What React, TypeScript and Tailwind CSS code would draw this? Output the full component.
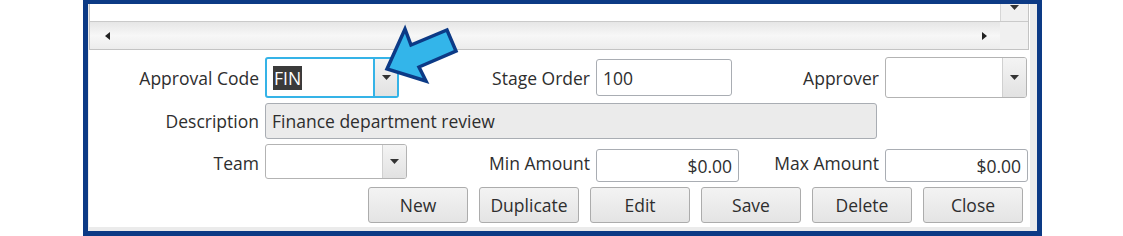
import React from 'react'

function DropArrow() {
  return (
    <svg width="9" height="5" viewBox="0 0 9 5">
      <path d="M0 0h9L4.5 5z" fill="#333" />
    </svg>
  )
}

function Combo(props: { className: string; focused?: boolean; children?: React.ReactNode }) {
  const f = props.focused
  return (
    <div
      className={
        'flex overflow-hidden rounded-[3px] bg-white ' +
        (f ? 'border-2 border-[#35b3e7] ' : 'border border-[#b3b3b3] ') +
        props.className
      }
    >
      <div className="flex flex-1 items-center pl-[6px]">{props.children}</div>
      <div
        className={
          'flex w-[24px] items-center justify-center bg-gradient-to-b from-[#f4f4f4] to-[#e2e2e2] ' +
          (f ? 'border-l-2 border-[#35b3e7]' : 'border-l border-[#d0d0d0]')
        }
      >
        <DropArrow />
      </div>
    </div>
  )
}

function TextBox(props: { className: string; value?: string; right?: boolean; disabled?: boolean }) {
  return (
    <div
      className={
        'flex items-center rounded-[3px] border border-[#a9adb3] px-[6px] pt-[1px] text-[17.5px] text-[#2e2e2e] ' +
        (props.right ? 'justify-end ' : '') +
        (props.disabled ? 'bg-[#ebebeb] ' : 'bg-white ') +
        props.className
      }
    >
      {props.value}
    </div>
  )
}

function Lbl(props: { className: string; children: React.ReactNode }) {
  return (
    <div className={'shrink-0 pr-[6px] pt-[1px] text-right text-[17.5px] text-[#2e2e2e] ' + props.className}>
      {props.children}
    </div>
  )
}

function Btn(props: { children: React.ReactNode }) {
  return (
    <button className="flex h-[36px] w-[100px] items-center justify-center rounded-[3px] border border-[#acacac] bg-gradient-to-b from-[#f3f3f3] to-[#e4e4e4] pt-[1px] text-[17.5px] text-[#2e2e2e]">
      {props.children}
    </button>
  )
}

export default function App() {
  return (
    <div className="relative h-[236px] w-[1123px] bg-white font-['Open_Sans','Noto_Sans',sans-serif]">
      <div className="ml-[83px] flex h-[236px] w-[959px] flex-col border-x-[5px] border-t-[4px] border-b-[5px] border-[#0c3a85] bg-[#ebebeb]">
        <div className="ml-[1px] flex h-[223px] w-[941px] flex-col bg-white">
          {/* list with scrollbars */}
          <div className="flex h-[46px] w-[940px] flex-col border-x border-b border-[#c3c3c3]">
            <div className="flex h-[17px]">
              <div className="flex-1 bg-white" />
              <div className="flex w-[28px] justify-center border-l border-[#d6d6d6] bg-[#f0f0f0] pt-[1px]">
                <DropArrow />
              </div>
            </div>
            <div className="flex h-[28px] border-t border-[#cacaca]">
              <div className="flex flex-1 items-center justify-between bg-gradient-to-b from-[#e6e6e6] via-[#f7f7f7] to-[#ececec] pl-[15px] pr-[13px]">
                <svg width="5" height="8" viewBox="0 0 5 8">
                  <path d="M5 0v8L0 4z" fill="#222" />
                </svg>
                <svg width="5" height="8" viewBox="0 0 5 8">
                  <path d="M0 0v8L5 4z" fill="#222" />
                </svg>
              </div>
              <div className="w-[28px] bg-[#f0f0f0]" />
            </div>
          </div>

          {/* row 1 */}
          <div className="mt-[7px] flex h-[41px] items-center">
            <Lbl className="w-[176px]">Approval Code</Lbl>
            <Combo className="h-[41px] w-[134px]" focused>
              <span className="bg-[#3a3a3a] px-[1px] text-[17.5px] leading-[24px] text-white">FIN</span>
            </Combo>
            <Lbl className="w-[197px]">Stage Order</Lbl>
            <TextBox className="h-[37px] w-[136px]" value="100" />
            <Lbl className="w-[153px]">Approver</Lbl>
            <Combo className="h-[41px] w-[142px]" />
          </div>

          {/* row 2 */}
          <div className="mt-[5px] flex h-[36px] items-center">
            <Lbl className="w-[176px]">Description</Lbl>
            <TextBox className="h-[36px] w-[612px]" value="Finance department review" disabled />
          </div>

          {/* row 3 */}
          <div className="mt-[5px] flex h-[38px] items-center">
            <Lbl className="w-[176px]">Team</Lbl>
            <Combo className="h-[35px] w-[142px] self-start" />
            <Lbl className="w-[189px]">Min Amount</Lbl>
            <TextBox className="h-[33px] w-[143px] self-end" value="$0.00" right />
            <Lbl className="w-[146px]">Max Amount</Lbl>
            <TextBox className="h-[33px] w-[143px] self-end" value="$0.00" right />
          </div>

          {/* row 4 */}
          <div className="ml-[279px] mt-[5px] flex gap-[11px]">
            <Btn>New</Btn>
            <Btn>Duplicate</Btn>
            <Btn>Edit</Btn>
            <Btn>Save</Btn>
            <Btn>Delete</Btn>
            <Btn>Close</Btn>
          </div>
        </div>
      </div>

      <svg className="pointer-events-none absolute left-0 top-0" width="1123" height="236" viewBox="0 0 1123 236">
        <polygon
          points="387,69 405,29 411,45 447,30 456,51 419,67 426,81"
          fill="#33b5ea"
          stroke="#0c3a86"
          strokeWidth="3.5"
          strokeLinejoin="miter"
        />
      </svg>
    </div>
  )
}
